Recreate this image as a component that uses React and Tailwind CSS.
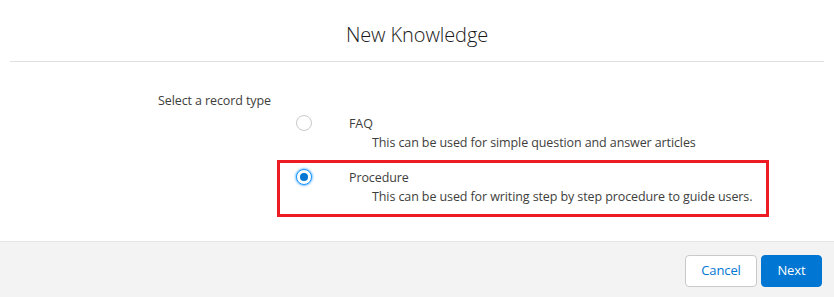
import React, { useState } from 'react';

const recordTypes = [
   { id: 'faq', label: 'FAQ', description: 'This can be used for simple question and answer articles' },
   { id: 'procedure', label: 'Procedure', description: 'This can be used for writing step by step procedure to guide users.' },
];

const Radio = ({ checked }) => (
   checked ? (
      <span className="flex h-4 w-4 shrink-0 items-center justify-center rounded-full border border-[#1b96ff] bg-white shadow-[0_0_2px_1px_rgba(27,150,255,0.55)]">
         <span className="h-2 w-2 rounded-full bg-[#0176d3]"></span>
      </span>
   ) : (
      <span className="h-4 w-4 shrink-0 rounded-full border border-[#c9c9c9] bg-white"></span>
   )
);

const App = () => {
   const [selected, setSelected] = useState('procedure');

   return (
      <div className="flex h-[297px] w-[834px] flex-col bg-white font-['Open_Sans','Noto_Sans',sans-serif] text-[12.5px] tracking-[-0.1px] text-[#3e3e3c]">
         {/* Header */}
         <div className="flex h-[61px] items-center justify-center pt-[8px]">
            <h2 className="text-[20px] font-light tracking-[-0.1px] text-[#181818]">New Knowledge</h2>
         </div>
         <div className="mx-[10px] border-t border-[#e0e0e0]"></div>

         {/* Body */}
         <div className="flex-1 pt-[30px]">
            <p className="pl-[158px] leading-[18px]">Select a record type</p>
            <div className="-mt-[4px] flex flex-col">
               {recordTypes.map((type) => {
                  const isSelected = selected === type.id;
                  return (
                     <div
                        key={type.id}
                        onClick={() => setSelected(type.id)}
                        className={`ml-[277px] flex w-[492px] cursor-pointer border-[3px] pl-[16px] pt-[6px] ${isSelected ? 'border-[#ed1c24] pb-[8px]' : 'border-transparent pb-[5px]'}`}
                     >
                        <Radio checked={isSelected} />
                        <div className="ml-[37px] whitespace-nowrap leading-[18px]">
                           <p>{type.label}</p>
                           <p className="mt-[1px] pl-[23px]">{type.description}</p>
                        </div>
                     </div>
                  );
               })}
            </div>
         </div>

         {/* Footer */}
         <div className="flex h-[56px] items-start justify-end gap-[4px] border-t border-[#e5e5e5] bg-[#f3f3f3] pr-[12px] pt-[13px]">
            <button className="h-[32px] w-[72px] rounded-[4px] border border-[#c9c9c9] bg-white text-[13px] text-[#0176d3]">
               Cancel
            </button>
            <button className="h-[32px] w-[61px] rounded-[4px] border border-[#0176d3] bg-[#0176d3] text-[13px] text-white">
               Next
            </button>
         </div>
      </div>
   );
};

export default App;
